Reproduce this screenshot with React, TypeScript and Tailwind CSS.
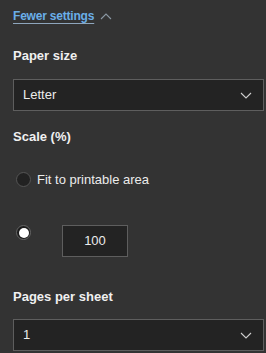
function Chevron({ up = false, className = '' }: { up?: boolean; className?: string }) {
  return (
    <svg
      width="12"
      height="7"
      viewBox="0 0 12 7"
      fill="none"
      className={className}
      style={up ? { transform: 'rotate(180deg)' } : undefined}
    >
      <path d="M1 1L6 6L11 1" stroke="currentColor" strokeWidth="1.1" />
    </svg>
  );
}

function Dropdown({ value }: { value: string }) {
  return (
    <div className="mr-[2px] flex h-[32px] items-center justify-between border border-[#5e5e5e] bg-[#232323] pl-[9px] pr-[11px] text-[13px] text-[#ececec]">
      <span>{value}</span>
      <Chevron className="text-[#cfcfcf]" />
    </div>
  );
}

export default function App() {
  return (
    <div
      className="h-[353px] w-[266px] overflow-hidden bg-[#333333] pl-[13px] text-[#f0f0f0]"
      style={{ fontFamily: '"Segoe UI", "Liberation Sans", Arial, sans-serif' }}
    >
      <div className="mt-[8px] flex h-[16px] items-center gap-[6px] text-[12px] leading-[16px]">
        <span className="font-bold tracking-[-0.2px] text-[#6aaee8] underline decoration-[#8ea6bd] underline-offset-[3px]">
          Fewer settings
        </span>
        <Chevron up className="text-[#8b98a4]" />
      </div>

      <p className="mt-[22px] h-[20px] text-[13px] font-bold leading-[20px]">Paper size</p>
      <div className="mt-[13px]">
        <Dropdown value="Letter" />
      </div>

      <p className="mt-[16px] h-[20px] text-[13px] font-bold leading-[20px]">Scale (%)</p>

      <div className="mt-[25px] flex items-center gap-[6px] pl-[3px] text-[13px] text-[#ececec]">
        <span className="h-[15px] w-[15px] rounded-full border border-[#555] bg-[#222]" />
        <span className="leading-[15px]">Fit to printable area</span>
      </div>

      <div className="mt-[38px] flex items-start pl-[3px]">
        <span className="flex h-[15px] w-[15px] items-center justify-center rounded-full border border-[#666] bg-[#1c1c1c]">
          <span className="h-[10px] w-[10px] rounded-full bg-white" />
        </span>
        <div className="ml-[31px] flex h-[32px] w-[66px] items-center justify-center border border-[#5e5e5e] bg-[#232323] text-[13px] text-[#ececec]">
          100
        </div>
      </div>

      <p className="mt-[30px] h-[20px] text-[13px] font-bold leading-[20px]">Pages per sheet</p>
      <div className="mt-[12px]">
        <Dropdown value="1" />
      </div>
    </div>
  );
}
